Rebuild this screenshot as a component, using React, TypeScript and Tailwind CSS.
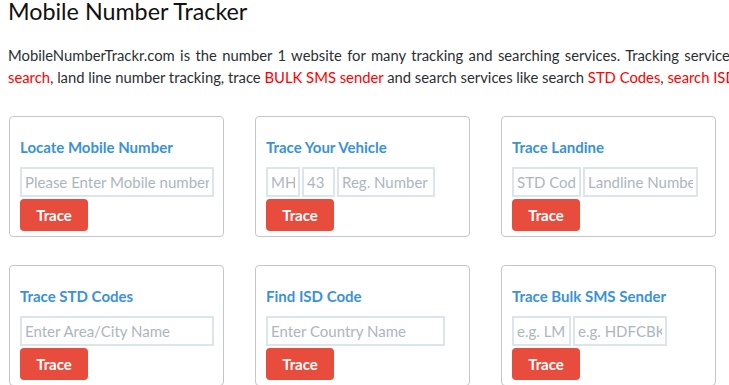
import React from "react";

const font = { fontFamily: "Lato, 'Noto Sans', sans-serif" };

function Field({ placeholder, w }: { placeholder: string; w: string }) {
  return (
    <input
      placeholder={placeholder}
      className={`${w} h-[30px] border-2 border-[#dce4ec] bg-white px-[3px] text-[15px] text-[#333] placeholder:text-[#acb6c0] outline-none`}
      style={font}
    />
  );
}

function Card({ title, children }: { title: string; children: React.ReactNode }) {
  return (
    <div className="w-[215px] h-[121px] shrink-0 rounded-[4px] border border-[#c3c7cb] bg-white px-[10px] pt-[19px]">
      <div className="text-[15px] font-bold leading-[22px] text-[#3a92d8]">{title}</div>
      <div className="mt-[9px] flex gap-[2px]">{children}</div>
      <button className="mt-[2px] h-[32px] w-[68px] rounded-[4px] bg-[#e74c3c] text-[15px] font-bold text-white">
        Trace
      </button>
    </div>
  );
}

export default function App() {
  return (
    <div className="w-[729px] h-[385px] overflow-hidden bg-white" style={font}>
      <div className="w-[1100px] pl-[8px]">
        <h1 className="-mt-[2px] text-[23.3px] font-normal leading-[26px] text-[#111]">Mobile Number Tracker</h1>
        <div className="mt-[20px] text-[14.8px] leading-[22px] text-[#2b2f33]">
          <div className="whitespace-nowrap [word-spacing:1.6px]">
            MobileNumberTrackr.com is the number 1 website for many tracking and searching services. Tracking services like{" "}
            <span className="text-[#ff0000]">mobile number</span>
          </div>
          <div className="whitespace-nowrap">
            <span className="text-[#ff0000]">search</span>, land line number tracking, trace{" "}
            <span className="text-[#ff0000]">BULK SMS sender</span> and search services like search{" "}
            <span className="text-[#ff0000]">STD Codes</span>, <span className="text-[#ff0000]">search ISD Codes</span>.
          </div>
        </div>
        <div className="mt-[28px] ml-[1px] flex flex-col gap-[28px]">
          <div className="flex gap-[31px]">
            <Card title="Locate Mobile Number">
              <Field placeholder="Please Enter Mobile number" w="w-[194px]" />
            </Card>
            <Card title="Trace Your Vehicle">
              <Field placeholder="MH" w="w-[34px]" />
              <Field placeholder="43" w="w-[33px]" />
              <Field placeholder="Reg. Number" w="w-[98px]" />
            </Card>
            <Card title="Trace Landine">
              <Field placeholder="STD Code" w="w-[69px]" />
              <Field placeholder="Landline Number" w="w-[115px]" />
            </Card>
          </div>
          <div className="flex gap-[31px]">
            <Card title="Trace STD Codes">
              <Field placeholder="Enter Area/City Name" w="w-[194px]" />
            </Card>
            <Card title="Find ISD Code">
              <Field placeholder="Enter Country Name" w="w-[179px]" />
            </Card>
            <Card title="Trace Bulk SMS Sender">
              <Field placeholder="e.g. LM" w="w-[59px]" />
              <Field placeholder="e.g. HDFCBK" w="w-[94px]" />
            </Card>
          </div>
        </div>
      </div>
    </div>
  );
}
